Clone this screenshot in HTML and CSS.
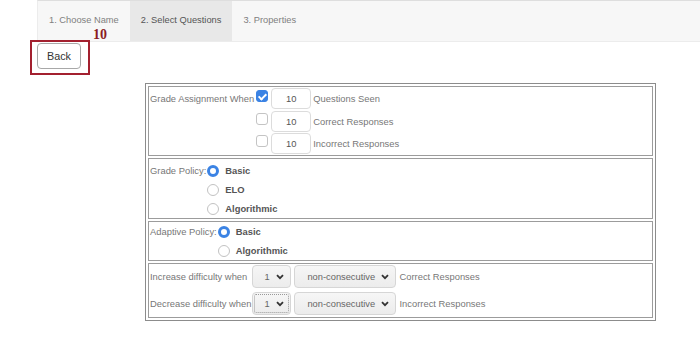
FILE: index.html
```html
<!DOCTYPE html>
<html>
<head>
  <title>Select Questions</title>
  <link rel="stylesheet" href="styles.css">
</head>
<body>
<div class="page">
  <!-- Wizard steps -->
  <div class="tabs">
    <div class="tab">1. Choose Name</div>
    <div class="tab active">2. Select Questions</div>
    <div class="tab">3. Properties</div>
  </div>

  <div class="toolbar">
    <button type="button" class="btn">Back</button>
  </div>

  <!-- annotation marker -->
  <div class="marker-box"></div>
  <span class="marker-num">10</span>

  <table class="settings">
    <tr>
      <td>
        <div class="assign">
          <span class="lbl">Grade Assignment When</span>
          <input type="checkbox" class="cb" checked>
          <input type="text" class="num" value="10">
          <span class="lbl">Questions Seen</span>

          <span></span>
          <input type="checkbox" class="cb">
          <input type="text" class="num" value="10">
          <span class="lbl">Correct Responses</span>

          <span></span>
          <input type="checkbox" class="cb">
          <input type="text" class="num" value="10">
          <span class="lbl">Incorrect Responses</span>
        </div>
      </td>
    </tr>
    <tr>
      <td class="tight first">
        <div class="policy">
          <span class="lbl">Grade Policy:</span>
          <label class="opt"><input type="radio" name="grade" class="rd" checked>Basic</label>
          <span></span>
          <label class="opt"><input type="radio" name="grade" class="rd">ELO</label>
          <span></span>
          <label class="opt"><input type="radio" name="grade" class="rd">Algorithmic</label>
        </div>
      </td>
    </tr>
    <tr>
      <td class="tight">
        <div class="policy">
          <span class="lbl">Adaptive Policy:</span>
          <label class="opt"><input type="radio" name="adaptive" class="rd" checked>Basic</label>
          <span></span>
          <label class="opt"><input type="radio" name="adaptive" class="rd">Algorithmic</label>
        </div>
      </td>
    </tr>
    <tr>
      <td>
        <div class="difficulty">
          <span class="lbl">Increase difficulty when</span>
          <div class="select small"><span>1</span>
            <svg width="8" height="6" viewBox="0 0 8 6"><path d="M1 1.2l3 3 3-3" fill="none" stroke="#333" stroke-width="1.8"/></svg>
          </div>
          <div class="select wide"><span>non-consecutive</span>
            <svg width="8" height="6" viewBox="0 0 8 6"><path d="M1 1.2l3 3 3-3" fill="none" stroke="#333" stroke-width="1.8"/></svg>
          </div>
          <span class="lbl">Correct Responses</span>

          <span class="lbl">Decrease difficulty when</span>
          <div class="select small focus"><span>1</span>
            <svg width="8" height="6" viewBox="0 0 8 6"><path d="M1 1.2l3 3 3-3" fill="none" stroke="#333" stroke-width="1.8"/></svg>
          </div>
          <div class="select wide"><span>non-consecutive</span>
            <svg width="8" height="6" viewBox="0 0 8 6"><path d="M1 1.2l3 3 3-3" fill="none" stroke="#333" stroke-width="1.8"/></svg>
          </div>
          <span class="lbl">Incorrect Responses</span>
        </div>
      </td>
    </tr>
  </table>
</div>
</body>
</html>
```

FILE: styles.css
```css
/* Page */
body {
  margin: 0;
  font-family: "Liberation Sans", Arial, sans-serif;
  color: #777;
}

.page {
  position: relative;
}

/* Steps bar */
.tabs {
  display: flex;
  margin-left: 37px;
  height: 40px;
  background-color: #f7f7f7;
  border-top: 1px solid #dedede;
  border-bottom: 1px solid #ececec;
  border-left: 1px solid #ececec;
}

.tab {
  padding: 0 11px;
  line-height: 38px;
  font-size: 9.3px;
  color: #808080;
}

.tab.active {
  background-color: #e8e8e8;
  color: #555;
}

/* Back button */
.toolbar {
  padding: 1px 0 0 37px;
}

.btn {
  width: 44px;
  height: 26px;
  padding: 0;
  font-family: "Liberation Sans", Arial, sans-serif;
  font-size: 10.8px;
  color: #333;
  background-color: #fff;
  border: 1px solid #a8a8a8;
  border-radius: 4px;
}

/* Annotation marker */
.marker-box {
  position: absolute;
  left: 30px;
  top: 40px;
  width: 60px;
  height: 35px;
  box-sizing: border-box;
  border: 2px solid #a3202f;
}

.marker-num {
  position: absolute;
  left: 93px;
  top: 27px;
  font-family: "Liberation Serif", serif;
  font-weight: bold;
  font-size: 14px;
  color: #8b1c24;
}

/* Settings table */
.settings {
  width: 511px;
  margin: 14px 0 0 145px;
  border: 1px solid #8c8c8c;
  border-spacing: 2px;
}

.settings td {
  border: 1px solid #9c9c9c;
  padding: 1px;
  vertical-align: top;
}

.settings td.tight {
  padding: 0 1px;
}

.settings td.first {
  padding-top: 2px;
}

.lbl {
  font-size: 9.4px;
  color: #777;
  white-space: nowrap;
}

/* Grade assignment rows */
.assign {
  display: grid;
  grid-template-columns: auto auto auto 1fr;
  row-gap: 1.5px;
  align-items: center;
}

.num {
  width: 40px;
  height: 21px;
  box-sizing: border-box;
  padding: 0;
  margin: 0 2px 0 0;
  border: 1px solid #dcdcdc;
  border-radius: 4px;
  text-align: center;
  font-family: "Liberation Sans", Arial, sans-serif;
  font-size: 9.4px;
  color: #555;
}

.cb {
  appearance: none;
  position: relative;
  align-self: start;
  width: 12px;
  height: 12px;
  margin: 2px 3px 0 2px;
  border: 1px solid #c4c4c4;
  border-radius: 3px;
  background-color: #fff;
}

.cb:checked {
  background-color: #3b83e4;
  border-color: #3b83e4;
}

.cb:checked::after {
  content: "";
  position: absolute;
  left: 3px;
  top: 0.5px;
  width: 3px;
  height: 6px;
  border: solid #fff;
  border-width: 0 2px 2px 0;
  transform: rotate(45deg);
}

/* Radio policies */
.policy {
  display: grid;
  grid-template-columns: auto 1fr;
  grid-auto-rows: 19px;
  align-items: center;
}

.opt {
  display: flex;
  align-items: center;
  font-size: 9.4px;
  font-weight: bold;
  color: #555;
}

.rd {
  appearance: none;
  width: 12px;
  height: 12px;
  box-sizing: border-box;
  margin: 0 6px 0 1px;
  border: 1px solid #c2c2c2;
  border-radius: 50%;
  background-color: #fff;
}

.rd:checked {
  border: 3.5px solid #3b83e4;
}

/* Difficulty selects */
.difficulty {
  display: grid;
  grid-template-columns: auto auto auto 1fr;
  row-gap: 4px;
  align-items: center;
  padding-bottom: 1px;
}

.select {
  display: flex;
  align-items: center;
  height: 23px;
  box-sizing: border-box;
  margin-right: 3px;
  border: 1px solid #d6d6d6;
  border-radius: 4px;
  background: linear-gradient(#f6f6f6, #ececec);
  font-size: 9.3px;
  color: #666;
}

.select svg {
  margin-left: 6px;
}

.select.small {
  width: 39px;
  margin-left: 1px;
  padding-left: 11px;
}

.select.wide {
  width: 102px;
  padding-left: 12px;
}

.select.focus {
  outline: 1px dotted #999;
  outline-offset: -3px;
}
```
